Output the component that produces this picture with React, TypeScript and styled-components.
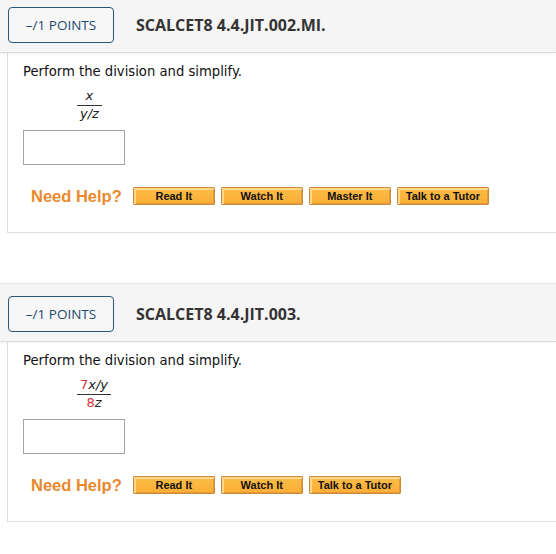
import styled, { createGlobalStyle } from "styled-components";

const GlobalStyle = createGlobalStyle`
  html, body {
    margin: 0;
    padding: 0;
    background: #ffffff;
  }
  body {
    font-family: "DejaVu Sans", Verdana, sans-serif;
    overflow: hidden;
  }
`;

type Part = { text: string; red?: boolean };

type Question = {
  id: string;
  numerator: Part[];
  denominator: Part[];
  buttons: string[];
};

const questions: Question[] = [
  {
    id: "SCALCET8 4.4.JIT.002.MI.",
    numerator: [{ text: "x" }],
    denominator: [{ text: "y/z" }],
    buttons: ["Read It", "Watch It", "Master It", "Talk to a Tutor"],
  },
  {
    id: "SCALCET8 4.4.JIT.003.",
    numerator: [{ text: "7", red: true }, { text: "x/y" }],
    denominator: [{ text: "8", red: true }, { text: "z" }],
    buttons: ["Read It", "Watch It", "Talk to a Tutor"],
  },
];

const renderParts = (parts: Part[]) =>
  parts.map((p, i) => (
    <Term key={i} $red={p.red}>
      {p.text}
    </Term>
  ));

export default function App() {
  return (
    <Page>
      <GlobalStyle />
      {questions.map((q) => (
        <Section key={q.id}>
          <Header>
            <Points>–/1 POINTS</Points>
            <Title>{q.id}</Title>
          </Header>
          <Body>
            <Prompt>Perform the division and simplify.</Prompt>
            <Fraction>
              <Numerator>{renderParts(q.numerator)}</Numerator>
              <Denominator>{renderParts(q.denominator)}</Denominator>
            </Fraction>
            <AnswerBox />
            <HelpRow>
              <NeedHelp>Need Help?</NeedHelp>
              {q.buttons.map((b) => (
                <HelpButton key={b}>{b}</HelpButton>
              ))}
            </HelpRow>
          </Body>
        </Section>
      ))}
    </Page>
  );
}

const Page = styled.div`
  display: flex;
  flex-direction: column;
  gap: 50px;
  margin-top: -6px;
`;

const Section = styled.section`
  display: flex;
  flex-direction: column;
`;

const Header = styled.div`
  display: flex;
  align-items: center;
  gap: 22px;
  padding: 12px 8px 9px;
  background: #f5f5f5;
  border-top: 1px solid #e6e6e6;
  border-bottom: 1px solid #dcdcdc;
  box-shadow: 0 1px 2px rgba(0, 0, 0, 0.06);
`;

const Points = styled.div`
  box-sizing: border-box;
  width: 106px;
  height: 36px;
  display: flex;
  align-items: center;
  justify-content: center;
  border: 1.5px solid #2a5577;
  border-radius: 4px;
  background: #f7f7f7;
  color: #1e4a6b;
  font-family: "Open Sans", sans-serif;
  font-size: 13.5px;
`;

const Title = styled.div`
  color: #333333;
  font-family: "Open Sans", sans-serif;
  font-weight: 700;
  font-size: 16px;
`;

const Body = styled.div`
  display: flex;
  flex-direction: column;
  align-items: flex-start;
  margin-left: 7px;
  padding: 11px 15px 26px;
  border-left: 1px solid #dddddd;
  border-bottom: 1px solid #dddddd;
`;

const Prompt = styled.div`
  color: #111111;
  font-size: 13.2px;
  line-height: 16px;
`;

const Fraction = styled.div`
  display: inline-flex;
  flex-direction: column;
  align-items: stretch;
  margin: 9px 0 0 54px;
  font-size: 13px;
  line-height: 14px;
  color: #222222;
  text-align: center;
`;

const Numerator = styled.div`
  padding: 0 3px 2px;
  border-bottom: 1px solid #333333;
`;

const Denominator = styled.div`
  padding: 1px 3px 0;
`;

const Term = styled.span<{ $red?: boolean }>`
  font-style: ${(p) => (p.$red ? "normal" : "oblique")};
  color: ${(p) => (p.$red ? "#d9363e" : "#222222")};
`;

const AnswerBox = styled.div`
  box-sizing: border-box;
  width: 102px;
  height: 35px;
  margin-top: 9px;
  border: 1px solid #a3a3a3;
  background: #ffffff;
`;

const HelpRow = styled.div`
  display: flex;
  align-items: center;
  gap: 6px;
  margin-top: 21px;
  padding-left: 8px;
`;

const NeedHelp = styled.span`
  margin-right: 5px;
  color: #e8892e;
  font-family: "Liberation Sans", Arial, sans-serif;
  font-weight: 700;
  font-size: 16.5px;
  line-height: 20px;
`;

const HelpButton = styled.button`
  box-sizing: border-box;
  min-width: 82px;
  height: 18px;
  padding: 0 8px;
  display: flex;
  align-items: center;
  justify-content: center;
  border: 1px solid #d1883a;
  border-radius: 1px;
  background: linear-gradient(#fcbd48, #fbae35);
  box-shadow: inset 2px 2px 0 #fdd98f, inset -1px -1px 0 #e39a3a;
  color: #111111;
  font-family: "Liberation Sans", Arial, sans-serif;
  font-weight: 700;
  font-size: 11px;
  cursor: pointer;
`;
